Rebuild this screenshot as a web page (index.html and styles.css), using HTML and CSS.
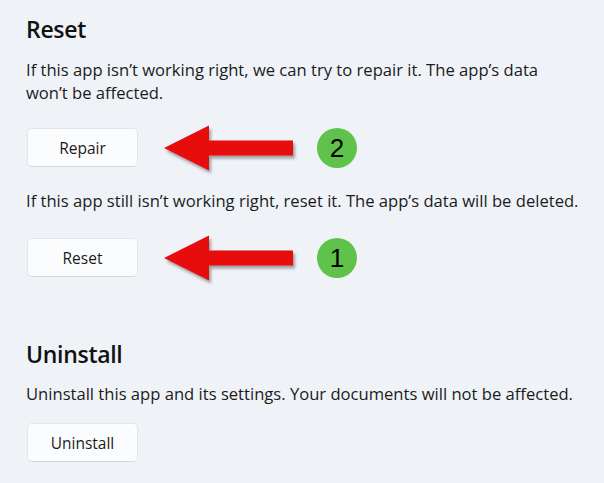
FILE: index.html
```html
<!DOCTYPE html>
<html lang="en">
<head>
<meta charset="utf-8">
<title>Reset</title>
<link rel="stylesheet" href="styles.css">
</head>
<body>
<main class="page">
  <section class="section">
    <h2 class="heading">Reset</h2>
    <p class="desc">If this app isn’t working right, we can try to repair it. The app’s data<br>won’t be affected.</p>
    <div class="row">
      <button class="btn">Repair</button>
      <svg class="arrow" width="134" height="54" viewBox="0 0 134 54" aria-hidden="true">
        <defs>
          <filter id="sh1" x="-10%" y="-20%" width="130%" height="160%">
            <feDropShadow dx="2" dy="3" stdDeviation="1.6" flood-color="#000" flood-opacity="0.35"/>
          </filter>
        </defs>
        <polygon points="1,24 46,1.5 46,16.5 130,16.5 130,31.5 46,31.5 46,46.5" fill="#e8090b" filter="url(#sh1)"/>
      </svg>
      <span class="badge">2</span>
    </div>
    <p class="desc desc-gap">If this app still isn’t working right, reset it. The app’s data will be deleted.</p>
    <div class="row row-gap">
      <button class="btn">Reset</button>
      <svg class="arrow" width="134" height="54" viewBox="0 0 134 54" aria-hidden="true">
        <defs>
          <filter id="sh2" x="-10%" y="-20%" width="130%" height="160%">
            <feDropShadow dx="2" dy="3" stdDeviation="1.6" flood-color="#000" flood-opacity="0.35"/>
          </filter>
        </defs>
        <polygon points="1,24 46,1.5 46,16.5 130,16.5 130,31.5 46,31.5 46,46.5" fill="#e8090b" filter="url(#sh2)"/>
      </svg>
      <span class="badge">1</span>
    </div>
  </section>
  <section class="section section-uninstall">
    <h2 class="heading">Uninstall</h2>
    <p class="desc desc-tight">Uninstall this app and its settings. Your documents will not be affected.</p>
    <div class="row row-uninstall">
      <button class="btn">Uninstall</button>
    </div>
  </section>
</main>
</body>
</html>
```
FILE: styles.css
```css
html, body {
  margin: 0;
  padding: 0;
  background: #eff3f8;
}
body {
  width: 604px;
  height: 483px;
  overflow: hidden;
  font-family: "Open Sans", "Noto Sans", sans-serif;
  color: #1b1b1b;
}
.page {
  padding: 14px 0 0 26px;
}
.section {
  display: flex;
  flex-direction: column;
  align-items: flex-start;
}
.heading {
  margin: 0;
  font-size: 23px;
  line-height: 30px;
  font-weight: 600;
  letter-spacing: -0.3px;
  color: #111;
}
.desc {
  margin: 14px 0 0 0;
  font-size: 16.6px;
  line-height: 23px;
  white-space: nowrap;
}
.desc-gap {
  margin-top: 22px;
}
.desc-tight {
  margin-top: 13px;
}
.row {
  display: flex;
  align-items: flex-start;
  margin-top: 24px;
  margin-left: 1px;
}
.row-gap {
  margin-top: 26px;
}
.row-uninstall {
  margin-top: 18px;
}
.section-uninstall {
  margin-top: 62px;
}
.btn {
  box-sizing: border-box;
  width: 111px;
  height: 39px;
  padding: 0;
  background: #fbfcfd;
  border: 1px solid #e2e5e9;
  border-bottom-color: #d3d6da;
  border-radius: 5px;
  font-family: "Open Sans", "Noto Sans", sans-serif;
  font-size: 15.5px;
  color: #1b1b1b;
}
.arrow {
  display: block;
  margin: -4px 0 -11px 25px;
  overflow: visible;
}
.badge {
  box-sizing: border-box;
  width: 40px;
  height: 40px;
  margin: 0 0 -1px 20px;
  border-radius: 50%;
  background: #5fc24a;
  color: #000;
  font-family: "Liberation Sans", Arial, sans-serif;
  font-size: 26px;
  line-height: 40px;
  text-align: center;
}
```
